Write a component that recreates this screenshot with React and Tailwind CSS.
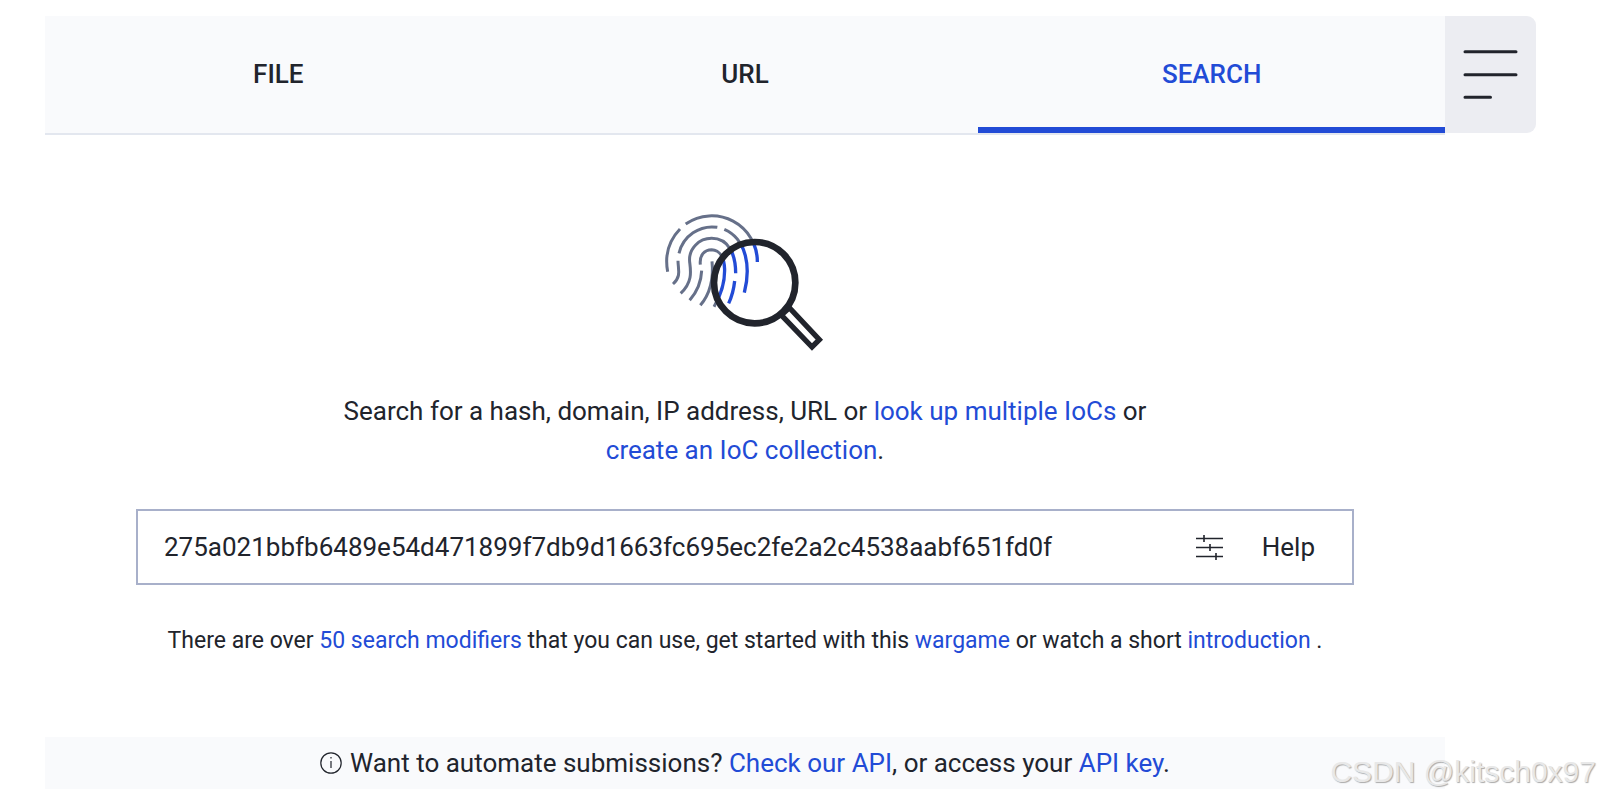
const link = "text-[#224bd6] hover:underline";

function Prints() {
  return (
    <>
      <path d="M107 72 A137 137 0 0 1 322 186" />
      <path d="M90 87 Q39 140 53 215" />
      <path d="M87 160 A102 102 0 0 1 202 82" />
      <path d="M223 88 C292 118 302 205 283 278" />
      <path d="M92 280 C129 246 122 211 119 186 C115 146 147 115 185 115 C236 115 257 163 257 220" />
      <path d="M254 243 Q250 280 236 310" />
      <path d="M151 194 C148 166 163 149 185 149 C235 151 236 244 192 320" />
      <path d="M186 184 Q194 265 151 316" />
      <path d="M155 212 Q153 262 119 301" />
      <path d="M84 182 C84 208 95 229 69 252" />
    </>
  );
}

function SearchArt() {
  return (
    <svg viewBox="0 0 570 495" className="h-[165px] w-[190px]" fill="none" aria-hidden="true">
      <defs>
        <clipPath id="lens">
          <circle cx="314" cy="248" r="116" />
        </clipPath>
      </defs>
      <g stroke="#667089" strokeWidth="9">
        <Prints />
      </g>
      <circle cx="314" cy="248" r="122" fill="#fff" />
      <g stroke="#224bd6" strokeWidth="10" clipPath="url(#lens)">
        <Prints />
      </g>
      <circle cx="314" cy="248" r="122" stroke="#21242c" strokeWidth="20" />
      <path d="M394 345 L418 323 L508 419 L486 441 Z" fill="#fff" stroke="#21242c" strokeWidth="16" />
    </svg>
  );
}

export default function App() {
  return (
    <div className="relative min-h-screen bg-white pt-4 pr-16 pl-[45px] font-['Roboto',sans-serif] text-[26px] text-[#21242c]">
      <div className="flex items-start">
        <div className="min-w-0 flex-1">
          <nav className="grid grid-cols-3 border-b-2 border-[#e3e7ef] bg-[#f9fafc] font-medium" role="tablist">
            <button role="tab" aria-selected="false" className="h-[117px]">FILE</button>
            <button role="tab" aria-selected="false" className="h-[117px]">URL</button>
            <button role="tab" aria-selected="true" className="h-[117px] border-b-6 border-[#224bd6] pt-[6px] text-[#224bd6]">SEARCH</button>
          </nav>

          <main className="flex flex-col items-center px-[91px] pt-[65px]">
            <SearchArt />
            <p className="mt-[27px] max-w-[900px] text-center leading-[39px]">
              Search for a hash, domain, IP address, URL or <a href="#lookup" className={link}>look up multiple IoCs</a> or
              <br />
              <a href="#collection" className={link}>create an IoC collection</a>.
            </p>
            <form className="mt-[39px] flex h-[76px] w-full items-center border-2 border-[#a8b0ca] pr-[37px] pl-[26px]" onSubmit={(e) => e.preventDefault()}>
              <input
                type="text"
                aria-label="Search query"
                defaultValue="275a021bbfb6489e54d471899f7db9d1663fc695ec2fe2a2c4538aabf651fd0f"
                className="min-w-0 flex-1 bg-transparent outline-none"
              />
              <button type="button" aria-label="Search options" className="mr-[38px]">
                <svg viewBox="0 0 28 26" className="h-[26px] w-7" stroke="#21242c" strokeWidth="1.6" fill="none">
                  <path d="M0 4.5H27M0 13.5H27M0 22.5H27M8 1V8M14 10V17M20 19V26" />
                </svg>
              </button>
              <button type="button">Help</button>
            </form>
            <p className="mt-10 text-center text-[23px] leading-8 whitespace-nowrap">
              There are over <a href="#modifiers" className={link}>50 search modifiers</a> that you can use, get started with this <a href="#wargame" className={link}>wargame</a> or watch a short <a href="#introduction" className={link}>introduction</a> .
            </p>
          </main>
        </div>
        <button aria-label="Menu" className="flex h-[117px] w-[91px] items-center justify-center rounded-r-[9px] bg-[#ecedf2]">
          <svg viewBox="0 0 55 50" className="h-[50px] w-[55px]" stroke="#21242c" strokeWidth="3" strokeLinecap="round">
            <path d="M2 1.7H53M2 24.7H53M2 47.3H27.5" />
          </svg>
        </button>
      </div>

      <footer className="mt-20 mr-[91px] flex h-[52px] items-center justify-center gap-2 bg-[#f9fafc]">
        <svg viewBox="0 0 22 22" className="size-[22px]" stroke="#21242c" strokeWidth="1.2" fill="none" aria-hidden="true">
          <circle cx="11" cy="11" r="10.2" />
          <path d="M11 9V16M11 5V6.6" />
        </svg>
        <p>
          Want to automate submissions? <a href="#api" className={link}>Check our API</a>, or access your <a href="#key" className={link}>API key</a>.
        </p>
      </footer>
      <span className="absolute right-1 bottom-3 font-['Liberation_Sans',sans-serif] text-[30px] leading-8 text-[#e8e8e8] [text-shadow:1px_1px_1px_#aaa]">CSDN @kitsch0x97</span>
    </div>
  );
}
